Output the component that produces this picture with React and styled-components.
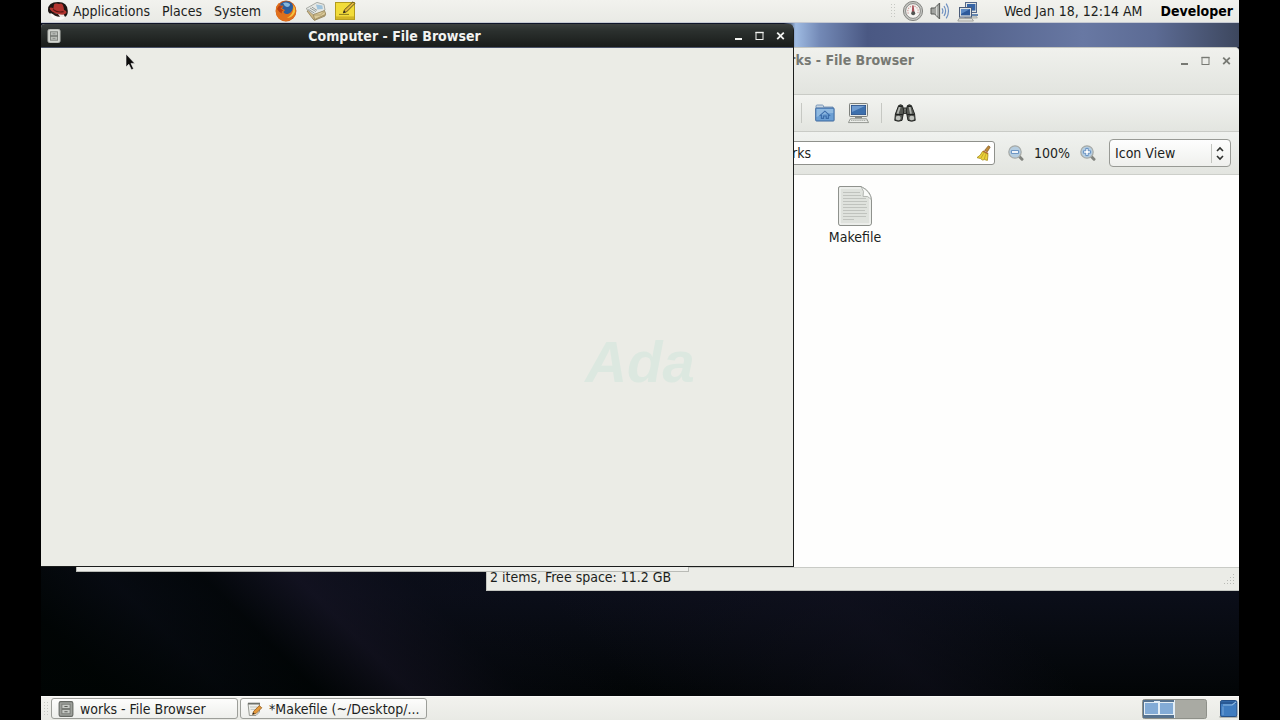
import React, {useState} from 'react';
import styled, {createGlobalStyle} from 'styled-components';

const GlobalStyle = createGlobalStyle`
  * {
    box-sizing: border-box;
  }
  body {
    margin: 0;
    background: #000;
    color: #1c1e1c;
    font-family: "DejaVu Sans Condensed", "DejaVu Sans", sans-serif;
    font-size: 14px;
    line-height: 16px;
  }
  button, input, select {
    font: inherit;
    color: inherit;
  }
  svg {
    display: block;
    flex: none;
  }
`;

/* ---------- icons ---------- */

const HatIcon = () => (
    <svg width="22" height="20" viewBox="0 0 22 20">
        <path d="M1 9 Q1 1 11 1 Q20.6 1 20.8 10 Q21 14 18 16 L16 12 L4 13 Q1 12 1 9Z" fill="#1d1512"/>
        <path d="M3.4 12 Q4 17.6 9 19 Q16 19.6 18.4 15.4 Q14 17 9 14Z" fill="#fbfaf7"/>
        <path d="M4 11.6 Q8 16 13 15.8 L11 13Z" fill="#2a1a15"/>
        <path d="M6 9 L7 3.5 Q8 2 10 2.6 Q12 3.4 14 2.6 Q16.5 3 17 9 Q20 10 19.4 12 Q17 15 11 13 Q4 11 2.6 7.4 Q3 6 6 7Z" fill="#b3352f"/>
        <path d="M6 8.4 Q10 12 16.6 10.6" fill="none" stroke="#5a1714" strokeWidth="1.2"/>
    </svg>
);

const FirefoxIcon = () => (
    <svg width="22" height="22" viewBox="0 0 22 22">
        <circle cx="11" cy="11" r="10.4" fill="#cf5b16"/>
        <circle cx="11.5" cy="8.6" r="7.4" fill="#2d5d9c"/>
        <path d="M8 3 Q12 1.4 15 4 Q15 7 12 7 Q9 6 8 3Z" fill="#86b7dc"/>
        <path d="M1 7 L3.6 3 L4.6 5.4 L8.6 5.8 L7 8.6 L10 10 L8.4 12 Q10 15 14 13.4 Q17.6 12 18 7 Q18 4 16.6 2.6 Q21 5.4 21.2 11 Q20.4 20.4 11 21.2 Q1.6 20.6 0.8 12Z" fill="#e0701c"/>
        <path d="M18.4 5 Q20.8 8 20 12 Q18 17.6 12 18 Q17.6 15 18.4 9Z" fill="#f5c33d"/>
        <path d="M2 9 L4 5.6 L8 6.4 L5.4 8.6 L8.4 10.4 Q6 11 7 13.4 Q4 12.6 2 9Z" fill="#b94012"/>
    </svg>
);

const MailIcon = () => (
    <svg width="22" height="20" viewBox="0 0 22 20">
        <path d="M2 10 L9 7 L20.6 12 L20 15 L9.4 19.4 L8 18Z" fill="#cdb683" stroke="#8d7d55" strokeWidth="0.8"/>
        <path d="M1 7.6 L12 1.4 L19 3.4 L20 9 L10 15Z" fill="#e6e8e4" stroke="#979b96" strokeWidth="0.8"/>
        <path d="M11 3.4 L17.4 4.4 L17.8 8 L12.4 8.6Z" fill="#9fc3dc"/>
        <path d="M3.4 8.4 L9.4 12 M5 7 L11 10.6 M6.8 6 L12 9.4" stroke="#8b9391" strokeWidth="0.9"/>
        <path d="M8.4 13.6 L19.6 9.6 L20.6 13.4 L9.6 18.6Z" fill="#dccb9a" stroke="#94845a" strokeWidth="0.8"/>
        <path d="M9 14 L15.4 14 L19.8 10" fill="none" stroke="#a6966a" strokeWidth="0.8"/>
    </svg>
);

const NoteIcon = () => (
    <svg width="21" height="20" viewBox="0 0 21 20">
        <rect x="0.5" y="1.5" width="19" height="17" fill="#f2dc3a" stroke="#b39b1e"/>
        <rect x="1" y="15.4" width="18" height="2.8" fill="#d2b526"/>
        <path d="M4 13.4 H14" stroke="#8a7b1d"/>
        <path d="M8.4 11.8 L9.4 8.8 L18 0.8 L19.8 2.6 L11.4 11 Z" fill="#e2b63a" stroke="#54491c" strokeWidth="0.9"/>
        <path d="M8 12.2 L9.2 9.6 L10.6 11Z" fill="#222"/>
    </svg>
);

const GaugeIcon = () => (
    <svg width="22" height="22" viewBox="0 0 22 22">
        <circle cx="11" cy="11" r="9.6" fill="#c3c4c0" stroke="#858682"/>
        <circle cx="11" cy="11" r="7.4" fill="#f4f3f0" stroke="#8b8c88"/>
        <path d="M6.4 13.6 A5.2 5.2 0 1 1 15.6 13.6" fill="none" stroke="#d1a3a0" strokeWidth="1.2" strokeDasharray="1.4 1"/>
        <path d="M10.2 5.6 L11.6 5.6 L12.6 13 L9.8 13Z" fill="#a8505a"/>
        <circle cx="11.2" cy="13.2" r="2" fill="#515552"/>
    </svg>
);

const VolumeIcon = () => (
    <svg width="21" height="20" viewBox="0 0 21 20">
        <path d="M1 7 H4.6 L9.6 2 V18 L4.6 13 H1Z" fill="#a2a4a0" stroke="#565955"/>
        <path d="M6.6 5.6 V14.4" stroke="#d8dad6" strokeWidth="1.2"/>
        <path d="M12 7.4 Q13.8 10 12 12.6 M14 5 Q17.2 10 14 15 M16.2 2.6 Q20.8 10 16.2 17.4" fill="none" stroke="#6d8fc0" strokeWidth="1.2"/>
    </svg>
);

const NetworkIcon = () => (
    <svg width="22" height="21" viewBox="0 0 22 21">
        <path d="M8 15 H19 L20.4 17 H8Z" fill="#d5d7d2" stroke="#9b9d98" strokeWidth="0.7"/>
        <rect x="8.5" y="1.5" width="11" height="10" fill="#e2e5e2" stroke="#54688a"/>
        <rect x="10" y="3" width="8.4" height="6.6" fill="#3564a5"/>
        <path d="M12 13 H21 V15 H12Z" fill="#6486b0"/>
        <rect x="2.5" y="6.5" width="12" height="9.6" fill="#dfe3e2" stroke="#4b5c79"/>
        <rect x="4" y="8" width="9" height="6.4" fill="#2e5a9a"/>
        <path d="M4 8 H13 L4 13Z" fill="#5c8ac4"/>
        <path d="M2 17.6 H15 L16.4 20 H0.8Z" fill="#e6e8e3" stroke="#8f918c" strokeWidth="0.8"/>
    </svg>
);

const CabinetIcon = ({size = 14, light}) => (
    <svg width={size} height={size} viewBox="0 0 14 14">
        <rect x="1" y="0.5" width="12" height="13" rx="1.4" fill={light ? '#d3d6d1' : '#9da09b'} stroke={light ? '#b8bbb6' : '#666964'}/>
        <rect x="3.4" y="2.8" width="7.2" height="3.8" fill={light ? '#babdb8' : '#c6c9c4'} stroke="#747772" strokeWidth="0.8"/>
        <rect x="3.4" y="7.4" width="7.2" height="3.8" fill={light ? '#babdb8' : '#c6c9c4'} stroke="#747772" strokeWidth="0.8"/>
        <path d="M5.6 4.8 H8.4 M5.6 9.4 H8.4" stroke={light ? '#8b8e89' : '#5b5e59'}/>
    </svg>
);

const HomeFolderIcon = () => (
    <svg width="22" height="18" viewBox="-1 0 22 18">
        <path d="M1 5 V2.2 Q1 1 2.2 1 H7.4 Q8.6 1 8.6 3 H18 V5Z" fill="#c9d6e2" stroke="#7291b4" strokeWidth="0.9"/>
        <rect x="0.7" y="4" width="18.4" height="13" rx="0.8" fill="#6b9fd4" stroke="#3d679c"/>
        <path d="M1.6 5 H18.2 V9 Q9 9 1.6 13Z" fill="#8fb9e0"/>
        <path d="M4.6 11.8 L9.9 7.2 L15.2 11.8 M6.4 11 V14.4 H8.6 V12 H11.2 V14.4 H13.4 V11" fill="none" stroke="#396ba8" strokeWidth="1.1"/>
    </svg>
);

const ComputerIcon = () => (
    <svg width="21" height="21" viewBox="0 0 21 21">
        <rect x="1.5" y="0.5" width="18" height="13" rx="0.8" fill="#e7eae7" stroke="#7e817d"/>
        <rect x="3.4" y="2.4" width="14.2" height="9.2" fill="#3d70ad" stroke="#28508a" strokeWidth="0.8"/>
        <path d="M4 3 H17 L4 9Z" fill="#6e9bd0"/>
        <path d="M7 14 H14 V15.4 H7Z" fill="#888b87"/>
        <path d="M2.4 15.8 H18.6 L20.6 19.6 H0.4Z" fill="#eceeea" stroke="#8b8e89" strokeWidth="0.9"/>
        <path d="M3 17.4 H18.4" stroke="#a4a7a2" strokeDasharray="1.4 0.7"/>
    </svg>
);

const BinocularsIcon = () => (
    <svg width="22" height="18" viewBox="0 0 22 18">
        <rect x="8.6" y="4" width="4.8" height="5.4" rx="1" fill="#72756f" stroke="#2c2e2b"/>
        <path d="M4.6 1.6 Q6.6 0 8.6 1.6 L9.8 7 L8 16.4 Q4.4 18 0.8 16.4 L1.4 10Z" fill="#555853" stroke="#242624"/>
        <path d="M13.4 1.6 Q15.4 0 17.4 1.6 L20.6 10 L21.2 16.4 Q17.6 18 14 16.4 L12.2 7Z" fill="#555853" stroke="#242624"/>
        <path d="M5.8 3 L3.6 9.6 M15.6 3 L17 9.6" stroke="#b2b5b0" strokeWidth="1.8"/>
        <path d="M1.6 10.6 H8.8 M13.2 10.6 H20.4 M4.4 2.4 H8.6 M13.4 2.4 H17.4" stroke="#1b1d1b"/>
        <ellipse cx="4.2" cy="14" rx="2.5" ry="2.2" fill="#c0c3be"/>
        <ellipse cx="17.8" cy="14" rx="2.5" ry="2.2" fill="#c0c3be"/>
    </svg>
);

const BroomIcon = () => (
    <svg width="16" height="16" viewBox="0 0 16 16">
        <path d="M8.6 5.4 L12.4 0.8 L14.2 2 L11.4 6.8Z" fill="#c08a3a" stroke="#7f5a22" strokeWidth="0.7"/>
        <path d="M7.4 5.4 L12.4 8 L12 9.6 L6.4 6.8Z" fill="#b8632a"/>
        <path d="M6.4 6.6 L12 9.4 L11.4 15.4 L8.6 14.6 L6.4 15 L4.6 13.6 L1 12.6 Q5 10.4 6.4 6.6Z" fill="#ecd23a" stroke="#a58a1b" strokeWidth="0.8"/>
        <path d="M7.6 8.4 L5 13 M9.6 9.4 L8.4 14" stroke="#b89b20" strokeWidth="0.8"/>
    </svg>
);

const ZoomIcon = ({plus}) => (
    <svg width="16" height="16" viewBox="0 0 16 16">
        <path d="M10.6 10.8 L14 14.2" stroke="#82847f" strokeWidth="3" strokeLinecap="round"/>
        <circle cx="7" cy="7" r="6.2" fill="#b5cde0" stroke="#a7aaa6" strokeWidth="1.2"/>
        <path d={plus ? 'M5.8 3.4 H8.2 V5.8 H10.6 V8.2 H8.2 V10.6 H5.8 V8.2 H3.4 V5.8 H5.8Z' : 'M3.4 5.6 H10.6 V8.4 H3.4Z'} fill="#fff" stroke="#5584bb" strokeWidth="0.9"/>
    </svg>
);

const TextFileIcon = () => (
    <svg width="36" height="42" viewBox="0 0 36 42">
        <path d="M3 1.5 H24 Q34 6 34.5 15 V38 Q34.5 40.5 32 40.5 H3 Q1.5 40.5 1.5 38 V3 Q1.5 1.5 3 1.5Z" fill="#dfe2dd" stroke="#8f928d"/>
        <path d="M3 3 H24 Q32 8 33 15 V39 H3Z" fill="none" stroke="#f8f9f7"/>
        <path d="M24 1.8 Q28 6 26 11.4 Q31 10 34.4 14.6 Q33 6 24 1.8Z" fill="#fafbf9" stroke="#a6a9a4" strokeWidth="0.8"/>
        <path d="M6 7.5 H23 M6 10.5 H24 M6 13.5 H29 M6 16.5 H30 M6 19.5 H29 M6 22.5 H30 M6 25.5 H28 M6 28.5 H30 M6 31.5 H29 M6 34.5 H17" stroke="#c0c3be"/>
    </svg>
);

const EditorIcon = () => (
    <svg width="16" height="16" viewBox="0 0 16 16">
        <path d="M1 2.5 H12.4 V11 L9 14.5 H2.4Z" fill="#f1f2ee" stroke="#989a94"/>
        <path d="M1 2.6 H13" stroke="#6e716b" strokeWidth="1.8"/>
        <path d="M3 6 H10 M3.6 8.4 H8" stroke="#c1c3bd"/>
        <path d="M5.6 13.4 L6.6 10.4 L12.2 4.6 L14.8 6.8 L9 12.6Z" fill="#e5993a" stroke="#8f591c" strokeWidth="0.8"/>
        <path d="M5.4 13.6 L6.2 11.4 L7.8 12.8Z" fill="#222"/>
    </svg>
);

const TrashIcon = () => (
    <svg width="19" height="19" viewBox="0 0 19 19">
        <path d="M0.6 17 H18.4 V18.6 H0.6Z" fill="#8d908b"/>
        <rect x="1.5" y="1.5" width="16.4" height="16" rx="1.6" fill="#3f7cc0" stroke="#254f86"/>
        <path d="M2 2.4 H17.4 V5 H2Z" fill="#295995"/>
        <path d="M4 6 H13 L17 3" fill="none" stroke="#8db8e2" strokeWidth="1.2"/>
        <path d="M4 7.4 V16" stroke="#6fa0d6" strokeWidth="1.2"/>
    </svg>
);

const SwitcherIcon = () => (
    <svg width="66" height="20" viewBox="0 0 66 20">
        <rect x="0.5" y="0.5" width="64" height="19" rx="2" fill="#a9aaa3" stroke="#8e9089"/>
        <path d="M1 1 H33 V19 H1Z" fill="#56728f"/>
        <rect x="2.5" y="3.5" width="14" height="12" fill="#83abd6" stroke="#e3edf5"/>
        <rect x="17.5" y="3.5" width="14" height="12" fill="#83abd6" stroke="#e3edf5"/>
        <path d="M12 2.5 H18 M32.5 1 V19" stroke="#e3edf5"/>
    </svg>
);

const ResizeGrip = () => (
    <svg width="12" height="12" viewBox="0 0 12 12">
        <path d="M9 1.5 H11 M6 4.5 H11 M3 7.5 H11 M0 10.5 H11" stroke="#b9bbb6" strokeDasharray="1 2"/>
    </svg>
);

const MinimizeGlyph = () => (
    <svg width="9" height="9" viewBox="0 0 9 9">
        <path d="M1 8 H8" stroke="currentColor" strokeWidth="2"/>
    </svg>
);

const MaximizeGlyph = () => (
    <svg width="9" height="9" viewBox="0 0 9 9">
        <rect x="1" y="1.5" width="7" height="7" fill="none" stroke="currentColor"/>
        <path d="M0.5 1.5 H8.5" stroke="currentColor" strokeWidth="1.4"/>
    </svg>
);

const CloseGlyph = () => (
    <svg width="9" height="9" viewBox="0 0 9 9">
        <path d="M1.2 1.6 L7.8 8.2 M7.8 1.6 L1.2 8.2" stroke="currentColor" strokeWidth="1.8"/>
    </svg>
);

const Pointer = () => (
    <svg width="11" height="18" viewBox="0 0 11 18">
        <path d="M1 1 V14 L3.8 11.2 L6.4 16.8 L8.6 15.8 L6 10.4 H9.8Z" fill="#0c0c0c" stroke="#f5f5f3" strokeWidth="0.6"/>
    </svg>
);

/* ---------- parts ---------- */

const TitleBar = ({title, active}) => (
    <Title $active={active}>
        {active ? <CabinetIcon light/> : <IconSpace/>}
        <TitleText>{title}</TitleText>
        <WindowButton aria-label="Minimize"><MinimizeGlyph/></WindowButton>
        <WindowButton aria-label="Maximize"><MaximizeGlyph/></WindowButton>
        <WindowButton aria-label="Close"><CloseGlyph/></WindowButton>
    </Title>
);

const LocationBar = () => {
    const [location, setLocation] = useState('works');
    const [view, setView] = useState('Icon View');

    return (
        <LocationRow>
            <LocationField>
                <LocationInput
                    type="text"
                    aria-label="Location"
                    value={location}
                    onChange={(e) => setLocation(e.target.value)}
                />
                <IconButton aria-label="Clear" onClick={() => setLocation('')}><BroomIcon/></IconButton>
            </LocationField>
            <ZoomGroup>
                <IconButton aria-label="Zoom out"><ZoomIcon/></IconButton>
                <span>100%</span>
                <IconButton aria-label="Zoom in"><ZoomIcon plus/></IconButton>
            </ZoomGroup>
            <SelectWrapper>
                <ViewSelect aria-label="View" value={view} onChange={(e) => setView(e.target.value)}>
                    <option>Icon View</option>
                </ViewSelect>
                <SelectArrows width="20" height="19" viewBox="0 0 20 19">
                    <path d="M1.5 0 V19" stroke="#c3c5c0"/>
                    <path d="M7 7 L10 4 L13 7 M7 12 L10 15 L13 12" fill="none" stroke="#2f312e" strokeWidth="1.6"/>
                </SelectArrows>
            </SelectWrapper>
        </LocationRow>
    );
};

const App = () => {
    return (
        <Screen>
            <GlobalStyle/>
            <TopPanel>
                <MenuButton><HatIcon/>Applications</MenuButton>
                <MenuButton>Places</MenuButton>
                <MenuButton>System</MenuButton>
                <Launchers>
                    <IconButton aria-label="Web browser"><FirefoxIcon/></IconButton>
                    <IconButton aria-label="Mail"><MailIcon/></IconButton>
                    <IconButton aria-label="Notes"><NoteIcon/></IconButton>
                </Launchers>
                <Tray>
                    <Grip/>
                    <GaugeIcon/>
                    <VolumeIcon/>
                    <NetworkIcon/>
                </Tray>
                <Clock>Wed Jan 18, 12:14 AM</Clock>
                <UserButton>Developer</UserButton>
            </TopPanel>

            <Desktop>
                <BackWindow>
                    <WindowHead>
                        <TitleBar title="works - File Browser"/>
                    </WindowHead>
                    <Toolbar>
                        <Separator/>
                        <IconButton aria-label="Home"><HomeFolderIcon/></IconButton>
                        <IconButton aria-label="Computer"><ComputerIcon/></IconButton>
                        <Separator/>
                        <IconButton aria-label="Search"><BinocularsIcon/></IconButton>
                    </Toolbar>
                    <LocationBar/>
                    <Files>
                        <FileItem>
                            <TextFileIcon/>
                            Makefile
                        </FileItem>
                    </Files>
                    <StatusBar>
                        <span>2 items, Free space: 11.2 GB</span>
                        <ResizeGrip/>
                    </StatusBar>
                </BackWindow>
                <MiddleWindow/>
                <FrontWindow>
                    <TitleBar title="Computer - File Browser" active/>
                </FrontWindow>
                <PointerSpot><Pointer/></PointerSpot>
            </Desktop>

            <BottomPanel>
                <Grip/>
                <TaskButton><CabinetIcon size={16}/>works - File Browser</TaskButton>
                <TaskButton><EditorIcon/>*Makefile (~/Desktop/...</TaskButton>
                <PanelEnd>
                    <IconButton aria-label="Workspaces"><SwitcherIcon/></IconButton>
                    <IconButton aria-label="Trash"><TrashIcon/></IconButton>
                </PanelEnd>
            </BottomPanel>
            <Watermark>Ada</Watermark>
        </Screen>
    );
};

const Screen = styled.div`
  position: relative;
  display: flex;
  flex-direction: column;
  min-height: 100vh;
  margin: 0 41px;
  overflow: hidden;
`;

const Panel = styled.div`
  display: flex;
  align-items: center;
  background: linear-gradient(#f2f2ee, #e9eae5);
`;

const TopPanel = styled(Panel)`
  height: 23px;
  padding: 0 6px;
  border-bottom: 1px solid #c5c9d2;
`;

const BottomPanel = styled(Panel)`
  height: 24px;
  padding-left: 2px;
  gap: 2px;
  border-top: 1px solid #fbfbf9;
`;

const MenuButton = styled.button`
  display: flex;
  align-items: center;
  gap: 4px;
  margin-right: 12px;
  padding: 0;
  border: none;
  background: none;
  white-space: nowrap;
`;

const IconButton = styled.button`
  display: flex;
  padding: 0;
  border: none;
  background: none;
`;

const Launchers = styled.div`
  display: flex;
  align-items: center;
  gap: 8px;
  margin-left: 2px;
`;

const Tray = styled.div`
  display: flex;
  align-items: center;
  gap: 6px;
  margin-left: auto;
`;

const Grip = styled.span`
  width: 6px;
  height: 16px;
  background: radial-gradient(#c6c8c3 1px, transparent 1px) 0 0 / 3px 3px;
`;

const Clock = styled.time`
  margin: 0 18px 0 25px;
  white-space: nowrap;
`;

const UserButton = styled.button`
  padding: 0;
  border: none;
  background: none;
  color: #000;
  font-weight: bold;
`;

const Desktop = styled.main`
  position: relative;
  flex: 1;
  background:
    linear-gradient(90deg, transparent 62%, #9fbbe2 63%, #7389b6 65%, #4a5883 69%, #55648e 78%, #6878a3 87%, #5c6b94 93%, #3d475e 100%) 0 0 / 100% 24px no-repeat,
    linear-gradient(45deg, rgba(0, 4, 3, 0.9) 4%, rgba(4, 8, 12, 0.6) 10%, rgba(0, 4, 4, 0.7) 15%, rgba(22, 20, 36, 0.6) 20%, rgba(10, 12, 22, 0.3) 26%, transparent 32%, rgba(18, 18, 32, 0.5) 48%, transparent 56%),
    linear-gradient(#10162a, #0b0e19 85%, #020506);
`;

const FileWindow = styled.section`
  position: absolute;
  display: flex;
  flex-direction: column;
`;

const BackWindow = styled(FileWindow)`
  top: 24px;
  right: 0;
  bottom: 105px;
  left: 445px;
  background: #ebece7;
  border: 1px solid #c4c6c1;
  border-width: 1px 0 1px 1px;
  border-radius: 4px 4px 0 0;
`;

const MiddleWindow = styled(FileWindow)`
  right: 550px;
  bottom: 124px;
  left: 35px;
  height: 40px;
  background: #eff0ec;
  border: 1px solid #b9bbb6;
`;

const FrontWindow = styled(FileWindow)`
  top: 1px;
  right: 445px;
  bottom: 129px;
  left: 0;
  background: #ebece6;
  border: 1px solid #1b1d1c;
  border-width: 0 1px 1px 0;
  border-radius: 4px 6px 0 0;
`;

const Title = styled.header`
  display: flex;
  align-items: center;
  height: 24px;
  padding: 0 2px 0 6px;
  border-radius: 4px 4px 0 0;
  color: ${({$active}) => ($active ? '#f2f3f1' : '#777973')};
  background: ${({$active}) => ($active ? 'linear-gradient(#3c403f, #2b302e 30%, #191c1a)' : 'none')};
  border-bottom: ${({$active}) => ($active ? '1px solid #4b546a' : 'none')};
`;

const TitleText = styled.h1`
  flex: 1;
  margin: 0;
  font-size: 14px;
  line-height: 16px;
  text-align: center;
`;

const IconSpace = styled.span`
  width: 16px;
`;

const WindowButton = styled.button`
  display: flex;
  justify-content: center;
  width: 21px;
  padding: 0;
  border: none;
  background: none;
  color: inherit;
`;

const WindowHead = styled.div`
  height: 47px;
  border-radius: 4px 4px 0 0;
  background: linear-gradient(#f0f1ed, #e2e4df);
  border-bottom: 1px solid #c9cbc6;
`;

const Toolbar = styled.nav`
  display: flex;
  align-items: center;
  gap: 12px;
  height: 37px;
  padding-left: 314px;
  background: linear-gradient(#f2f3f0, #e3e5e0);
  border-bottom: 1px solid #c9cbc6;
`;

const Separator = styled.span`
  width: 1px;
  height: 20px;
  background: #c6c8c3;
`;

const LocationRow = styled.div`
  display: flex;
  align-items: center;
  justify-content: flex-end;
  gap: 13px;
  height: 43px;
  padding-right: 8px;
  background: linear-gradient(#f0f2ef, #e3e5e0);
  border-bottom: 1px solid #cdcfca;
`;

const LocationField = styled.div`
  display: flex;
  align-items: center;
  width: 227px;
  height: 24px;
  padding: 0 2px 0 5px;
  background: #fff;
  border: 1px solid #8f918c;
  border-radius: 3px;
`;

const LocationInput = styled.input`
  flex: 1;
  min-width: 0;
  padding: 0;
  border: none;
  outline: none;
  background: none;
`;

const ZoomGroup = styled.div`
  display: flex;
  align-items: center;
  gap: 10px;
`;

const SelectWrapper = styled.div`
  position: relative;
`;

const ViewSelect = styled.select`
  display: block;
  width: 122px;
  height: 28px;
  padding: 0 24px 0 5px;
  appearance: none;
  background: linear-gradient(#fefefe, #eff0ed);
  border: 1px solid #989a95;
  border-radius: 4px;
`;

const SelectArrows = styled.svg`
  position: absolute;
  top: 5px;
  right: 1px;
  pointer-events: none;
`;

const Files = styled.div`
  flex: 1;
  display: flex;
  align-items: flex-start;
  padding: 10px 0 0 328px;
  background: #fefefd;
`;

const FileItem = styled.div`
  display: flex;
  flex-direction: column;
  align-items: center;
  gap: 2px;
  width: 80px;
`;

const StatusBar = styled.footer`
  display: flex;
  justify-content: space-between;
  align-items: flex-start;
  height: 23px;
  padding: 0 3px;
  border-top: 1px solid #c9cbc6;
  line-height: 18px;

  svg {
    align-self: center;
  }
`;

const PointerSpot = styled.div`
  position: absolute;
  top: 30px;
  left: 84px;
`;

const TaskButton = styled.button`
  display: flex;
  align-items: center;
  gap: 6px;
  width: 187px;
  height: 21px;
  padding: 0 6px;
  background: linear-gradient(#fdfdfc, #eeefec);
  border: 1px solid #9c9e99;
  border-radius: 3px;
  white-space: nowrap;
`;

const PanelEnd = styled.div`
  display: flex;
  align-items: center;
  gap: 11px;
  margin-left: auto;
  padding-right: 1px;
`;

const Watermark = styled.div`
  position: absolute;
  top: 50%;
  left: 50%;
  padding-top: 4px;
  transform: translate(-50%, -50%);
  color: #dce8e0;
  font: italic bold 58px/60px "Liberation Sans", sans-serif;
  pointer-events: none;
`;

export default App;
